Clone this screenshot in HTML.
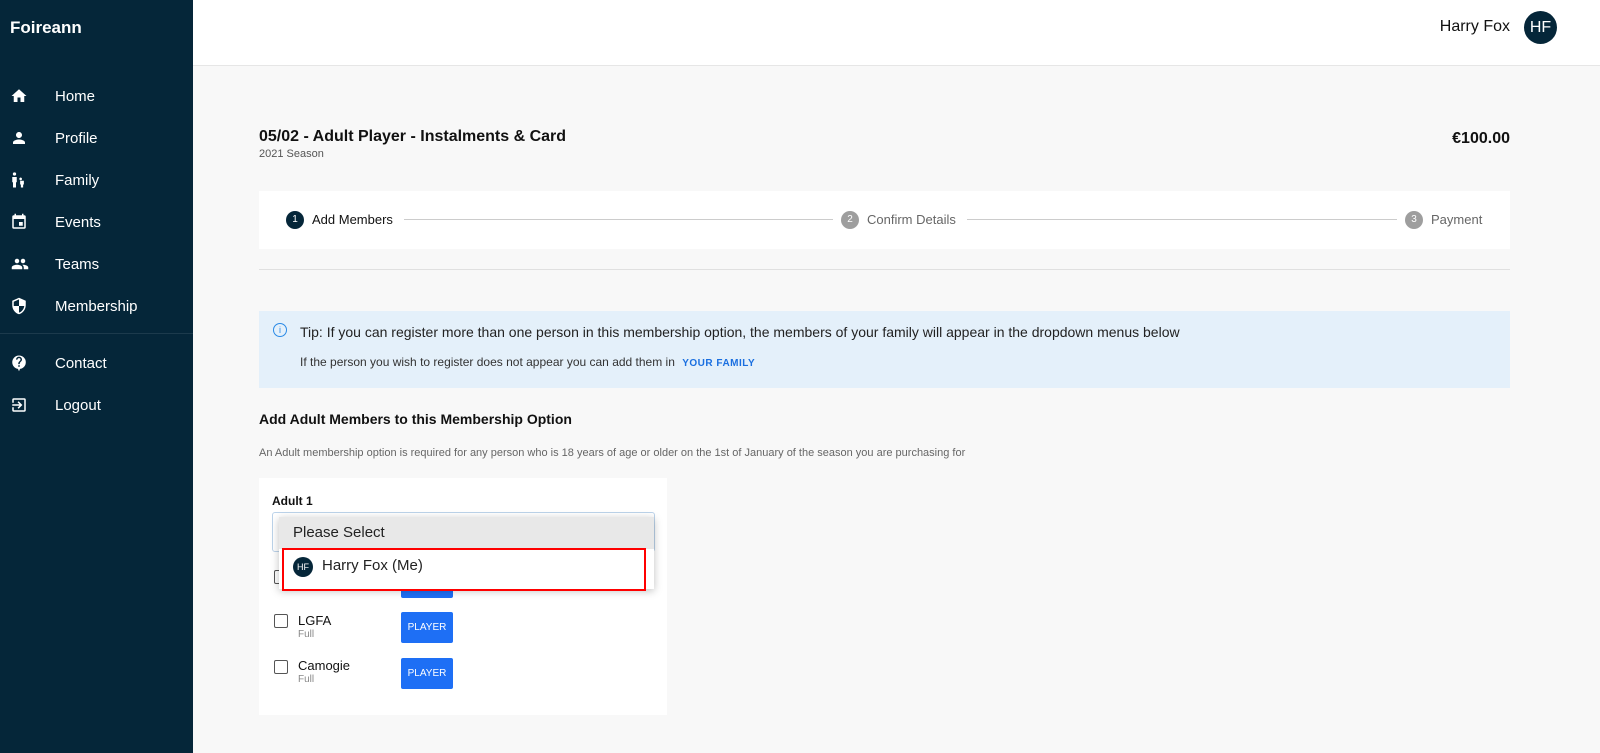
<!DOCTYPE html>
<html><head><meta charset="utf-8"><style>
*{box-sizing:border-box;margin:0;padding:0}
body{width:1600px;height:753px;overflow:hidden;font-family:"Liberation Sans",sans-serif;background:#f8f8f8;position:relative;color:#111}
.sb{position:absolute;left:0;top:0;width:193px;height:753px;background:#052639;color:#fff}
.logo{position:absolute;left:10px;top:18px;font-weight:bold;font-size:17px}
.nav{position:absolute;left:0;width:193px;height:20px;font-size:15px}
.nav span{position:absolute;left:55px;top:2px}
.nav svg{position:absolute;left:10px;top:1px}
.top{position:absolute;left:193px;top:0;right:0;height:66px;background:#fff;border-bottom:1px solid #e6e6e6}
.a{position:absolute;font-size:13px}
</style></head><body>
<div class="sb">
<div class="logo">Foireann</div>
<div class="nav" style="top:86px"><svg width="18" height="18" viewBox="0 0 24 24"><path fill="#fff" d="M10 20v-6h4v6h5v-8h3L12 3 2 12h3v8z"/></svg><span>Home</span></div>
<div class="nav" style="top:128px"><svg width="18" height="18" viewBox="0 0 24 24"><path fill="#fff" d="M12 12c2.2 0 4-1.8 4-4s-1.8-4-4-4-4 1.8-4 4 1.8 4 4 4zm0 2c-2.7 0-8 1.3-8 4v2h16v-2c0-2.7-5.3-4-8-4z"/></svg><span>Profile</span></div>
<div class="nav" style="top:170px"><svg width="18" height="18" viewBox="0 0 24 24"><circle cx="6" cy="4" r="2.2" fill="#fff"/><path fill="#fff" d="M3 8h6v7H8v7H4v-7H3zM16 10.5a1.8 1.8 0 1 0 0 .1zM13.5 13h5v5h-1v4h-3v-4h-1z"/></svg><span>Family</span></div>
<div class="nav" style="top:212px"><svg width="18" height="18" viewBox="0 0 24 24"><path fill="#fff" d="M17 12h-5v5h5v-5zM16 1v2H8V1H6v2H5a2 2 0 0 0-2 2v14a2 2 0 0 0 2 2h14a2 2 0 0 0 2-2V5a2 2 0 0 0-2-2h-1V1h-2zm3 18H5V8h14v11z"/></svg><span>Events</span></div>
<div class="nav" style="top:254px"><svg width="20" height="18" viewBox="0 0 24 24"><path fill="#fff" d="M16 11c1.7 0 3-1.3 3-3s-1.3-3-3-3-3 1.3-3 3 1.3 3 3 3zm-8 0c1.7 0 3-1.3 3-3S9.7 5 8 5 5 6.3 5 8s1.3 3 3 3zm0 2c-2.3 0-7 1.2-7 3.5V19h14v-2.5C15 14.2 10.3 13 8 13zm8 0c-.3 0-.6 0-1 .1 1.2.8 2 2 2 3.4V19h6v-2.5c0-2.3-4.7-3.5-7-3.5z"/></svg><span>Teams</span></div>
<div class="nav" style="top:296px"><svg width="18" height="18" viewBox="0 0 24 24"><path fill="#fff" d="M12 1 3 5v6c0 5.5 3.8 10.7 9 12 5.2-1.3 9-6.5 9-12V5l-9-4zm0 11h7c-.5 4.1-3.3 7.8-7 8.9V12H5V6.3l7-3.1V12z"/></svg><span>Membership</span></div>
<div style="position:absolute;top:333px;left:0;width:193px;border-top:1px solid #1c3a4c"></div>
<div class="nav" style="top:353px"><svg width="18" height="18" viewBox="0 0 24 24"><path fill="#fff" d="M12 2a9 9 0 0 0-9 9c0 4.5 3.3 8.2 7.6 8.9L12 23l1.4-3.1A9 9 0 0 0 12 2zm1 15h-2v-2h2v2zm2-7.3-.9.9C13.4 11.4 13 12 13 13.5h-2V13c0-1.1.4-2.1 1.2-2.8l1.2-1.3c.4-.3.6-.8.6-1.4a2 2 0 1 0-4 0H8a4 4 0 1 1 8 0c0 .9-.4 1.6-1 2.2z"/></svg><span>Contact</span></div>
<div class="nav" style="top:395px"><svg width="18" height="18" viewBox="0 0 24 24"><path fill="#fff" d="M10.1 15.6 11.5 17l5-5-5-5-1.4 1.4 2.6 2.6H3v2h9.7l-2.6 2.6zM19 3H5a2 2 0 0 0-2 2v4h2V5h14v14H5v-4H3v4a2 2 0 0 0 2 2h14a2 2 0 0 0 2-2V5a2 2 0 0 0-2-2z"/></svg><span>Logout</span></div>
</div>
<div class="top">
<div style="position:absolute;right:90px;top:18px;font-size:16px">Harry Fox</div>
<div style="position:absolute;right:43px;top:11px;width:33px;height:33px;border-radius:50%;background:#052639;color:#fff;font-size:16px;text-align:center;line-height:33px">HF</div>
</div>
<div class="a" style="left:259px;top:128px;font-size:16px;font-weight:bold">05/02 - Adult Player - Instalments &amp; Card</div>
<div class="a" style="left:259px;top:148px;font-size:11px;color:#555">2021 Season</div>
<div class="a" style="right:90px;top:130px;font-size:16px;font-weight:bold">€100.00</div>
<div style="position:absolute;left:259px;top:191px;width:1251px;height:58px;background:#fff"></div>
<div style="position:absolute;left:286px;top:211px;width:18px;height:18px;border-radius:50%;background:#052639;color:#fff;font-size:10px;text-align:center;line-height:18px">1</div>
<div class="a" style="left:312px;top:212px">Add Members</div>
<div style="position:absolute;left:404px;top:219px;width:429px;border-top:1px solid #ccc"></div>
<div style="position:absolute;left:841px;top:211px;width:18px;height:18px;border-radius:50%;background:#9e9e9e;color:#fff;font-size:10px;text-align:center;line-height:18px">2</div>
<div class="a" style="left:867px;top:212px;color:#666">Confirm Details</div>
<div style="position:absolute;left:967px;top:219px;width:430px;border-top:1px solid #ccc"></div>
<div style="position:absolute;left:1405px;top:211px;width:18px;height:18px;border-radius:50%;background:#9e9e9e;color:#fff;font-size:10px;text-align:center;line-height:18px">3</div>
<div class="a" style="left:1431px;top:212px;color:#666">Payment</div>
<div style="position:absolute;left:259px;top:269px;width:1251px;border-top:1px solid #e0e0e0"></div>
<div style="position:absolute;left:259px;top:311px;width:1251px;height:77px;background:#e4f0fa"></div>
<div style="position:absolute;left:273px;top:323px;width:14px;height:14px;border:1.3px solid #2a8ae6;border-radius:50%;color:#2a8ae6;font-size:9px;text-align:center;line-height:12px">i</div>
<div class="a" style="left:300px;top:324px;font-size:14px;color:#222">Tip: If you can register more than one person in this membership option, the members of your family will appear in the dropdown menus below</div>
<div class="a" style="left:300px;top:355px;font-size:12px;color:#333">If the person you wish to register does not appear you can add them in <b style="color:#1a6fe0;font-size:10px;letter-spacing:.5px;margin-left:4px">YOUR FAMILY</b></div>
<div class="a" style="left:259px;top:411px;font-size:14px;font-weight:bold">Add Adult Members to this Membership Option</div>
<div class="a" style="left:259px;top:447px;font-size:11px;color:#666">An Adult membership option is required for any person who is 18 years of age or older on the 1st of January of the season you are purchasing for</div>
<div style="position:absolute;left:259px;top:478px;width:408px;height:237px;background:#fff"></div>
<div class="a" style="left:272px;top:494px;font-size:12px;font-weight:bold">Adult 1</div>
<div style="position:absolute;left:272px;top:512px;width:383px;height:40px;border:1px solid #bcd3ea;border-radius:3px"></div>
<div style="position:absolute;left:274px;top:570px;width:14px;height:14px;border:1.5px solid #555;border-radius:2px"></div>
<div style="position:absolute;left:401px;top:570px;width:52px;height:28px;background:#1e6ff5;border-radius:2px"></div>
<div style="position:absolute;left:274px;top:614px;width:14px;height:14px;border:1.5px solid #555;border-radius:2px"></div>
<div class="a" style="left:298px;top:613px">LGFA</div>
<div class="a" style="left:298px;top:629px;font-size:10px;color:#888">Full</div>
<div style="position:absolute;left:401px;top:612px;width:52px;height:31px;background:#1e6ff5;border-radius:2px;color:#fff;font-size:10px;text-align:center;line-height:31px">PLAYER</div>
<div style="position:absolute;left:274px;top:660px;width:14px;height:14px;border:1.5px solid #555;border-radius:2px"></div>
<div class="a" style="left:298px;top:658px">Camogie</div>
<div class="a" style="left:298px;top:674px;font-size:10px;color:#888">Full</div>
<div style="position:absolute;left:401px;top:658px;width:52px;height:31px;background:#1e6ff5;border-radius:2px;color:#fff;font-size:10px;text-align:center;line-height:31px">PLAYER</div>
<div style="position:absolute;left:279px;top:517px;width:375px;height:72px;background:#fff;box-shadow:0 2px 8px rgba(0,0,0,.25)">
<div style="height:32px;background:#e8e8e8;padding-left:14px;font-size:15px;line-height:32px;color:#222">Please Select</div>
</div>
<div style="position:absolute;left:282px;top:548px;width:364px;height:43px;border:2px solid #f00"></div>
<div style="position:absolute;left:293px;top:557px;width:20px;height:20px;border-radius:50%;background:#052639;color:#fff;font-size:9px;text-align:center;line-height:20px">HF</div>
<div class="a" style="left:322px;top:557px;font-size:15px;color:#222">Harry Fox (Me)</div>
</body></html>
